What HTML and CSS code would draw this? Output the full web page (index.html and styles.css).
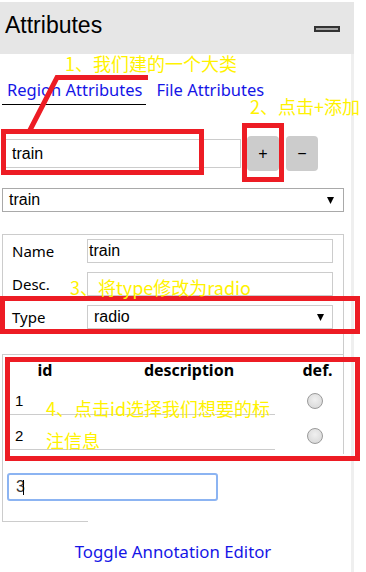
FILE: index.html
```html
<!DOCTYPE html>
<html lang="zh-CN">
<head>
    <meta charset="UTF-8">
    <meta name="viewport" content="width=device-width, initial-scale=1.0">
    <title>Attributes</title>
    <link rel="stylesheet" href="styles.css">
</head>
<body>
    <div class="page">
        <div class="panel">
            <div class="panel-header">
                <span class="panel-title">Attributes</span>
                <span class="minimize"></span>
            </div>
            <div class="panel-body">
                <div class="tabs">
                    <span class="tab active">Region Attributes</span>
                    <span class="tab">File Attributes</span>
                </div>
                <div class="attr-add">
                    <div class="text-input">train</div>
                    <button class="btn">+</button>
                    <button class="btn">&minus;</button>
                </div>
                <div class="select attr-select">
                    <span>train</span>
                    <svg class="select-arrow" viewBox="0 0 7 7"><polygon points="0,0 7,0 3.5,7"></polygon></svg>
                </div>
                <div class="attr-editor">
                    <div class="attr-props">
                        <div class="prop-row">
                            <span class="prop-label">Name</span>
                            <div class="prop-input">train</div>
                        </div>
                        <div class="prop-row">
                            <span class="prop-label">Desc.</span>
                            <div class="prop-input"></div>
                        </div>
                        <div class="prop-row">
                            <span class="prop-label">Type</span>
                            <div class="select prop-select">
                                <span>radio</span>
                                <svg class="select-arrow" viewBox="0 0 7 7"><polygon points="0,0 7,0 3.5,7"></polygon></svg>
                            </div>
                        </div>
                    </div>
                    <div class="options">
                        <div class="options-head">
                            <span>id</span>
                            <span>description</span>
                            <span>def.</span>
                        </div>
                        <div class="option-row">
                            <span class="opt-id">1</span>
                            <span class="opt-desc"></span>
                            <span class="opt-def"><span class="radio"></span></span>
                        </div>
                        <div class="option-row">
                            <span class="opt-id">2</span>
                            <span class="opt-desc"></span>
                            <span class="opt-def"><span class="radio"></span></span>
                        </div>
                    </div>
                </div>
                <div class="options-add">
                    <div class="focus-input">3<span class="caret"></span></div>
                </div>
                <div class="options-foot"></div>
                <div class="toggle-link">Toggle Annotation Editor</div>
            </div>
        </div>

        <!-- hand-drawn annotations on top of the screenshot -->
        <svg class="marks" width="366" height="572" viewBox="0 0 366 572">
            <g fill="none" stroke="#ed1c24" stroke-width="5">
                <polyline points="29,132 57,77.5 148,77.5"></polyline>
                <rect x="3.5" y="131.5" width="198" height="41"></rect>
                <rect x="244.5" y="125.5" width="37" height="54"></rect>
                <rect x="2.5" y="298.5" width="355" height="33"></rect>
                <rect x="7.5" y="359.5" width="350" height="99"></rect>
            </g>
        </svg>
        <div class="note note-1">1、我们建的一个大类</div>
        <div class="note note-2">2、点击+添加</div>
        <div class="note note-3">3、将type修改为radio</div>
        <div class="note note-4">4、点击id选择我们想要的标<br>注信息</div>
    </div>
</body>
</html>
```
FILE: styles.css
```css
* {
    margin: 0;
    padding: 0;
    box-sizing: border-box;
}

body {
    font-family: "Noto Sans", "Open Sans", sans-serif;
    color: #000;
    background: #fff;
}

.page {
    position: relative;
    width: 366px;
    height: 572px;
    overflow: hidden;
}

.panel {
    width: 354px;
    padding-top: 2px;
}

.panel-header {
    height: 52px;
    background: #e6e6e6;
    display: flex;
    justify-content: space-between;
    align-items: flex-start;
}

.panel-title {
    font-family: "Liberation Sans", Arial, sans-serif;
    font-size: 23px;
    line-height: 26px;
    padding: 10px 0 0 5px;
}

.minimize {
    width: 26px;
    height: 6px;
    margin: 24px 14px 0 0;
    border: 2px solid #333;
    background: #a6a6a6;
}

.panel-body {
    height: 518px;
    border-right: 3px solid #efefef;
    padding-left: 2px;
}

.tabs {
    display: flex;
    padding-top: 26px;
    font-size: 16.5px;
    line-height: 20px;
    color: #1515e6;
}

.tab {
    padding: 0 4px 4px 5px;
}

.tab.active {
    border-bottom: 1px solid #000;
}

.tab + .tab {
    margin-left: 5px;
}

.attr-add {
    display: flex;
    align-items: center;
    margin-top: 31px;
}

.text-input {
    width: 239px;
    height: 29px;
    border: 1px solid #ccc;
    padding-left: 9px;
    font: 16px/27px "Liberation Sans", Arial, sans-serif;
}

.btn {
    width: 32px;
    height: 35px;
    margin-left: 6px;
    border: none;
    border-radius: 4px;
    background: #ccc;
    color: #000;
    font: 16px "Liberation Sans", Arial, sans-serif;
}

.btn + .btn {
    margin-left: 7px;
}

.select {
    display: flex;
    align-items: center;
    justify-content: space-between;
    height: 24px;
    border: 1px solid #a9a9a9;
    padding: 0 9px 0 6px;
    font: 16px/22px "Liberation Sans", Arial, sans-serif;
}

.select-arrow {
    width: 7px;
    height: 7px;
    fill: #000;
}

.attr-select {
    width: 342px;
    margin-top: 17px;
}

.attr-editor {
    width: 342px;
    margin-top: 22px;
    border-right: 1px solid #ccc;
}

.attr-props {
    display: flex;
    flex-direction: column;
    gap: 9px;
    padding: 4px 9px 3px 9px;
    border-top: 1px solid #ccc;
    border-left: 1px solid #ccc;
}

.prop-row {
    display: flex;
    align-items: center;
    height: 24px;
}

.prop-label {
    width: 75px;
    font-size: 15px;
}

.prop-input {
    width: 246px;
    height: 24px;
    border: 1px solid #ccc;
    padding-left: 1px;
    font: 16px/22px "Liberation Sans", Arial, sans-serif;
}

.prop-select {
    width: 246px;
    border-color: #ccc;
    padding-right: 8px;
}

.options {
    margin-top: 22px;
    padding: 0 2px 4px 4px;
    border-top: 1px solid #ccc;
    border-left: 1px solid #ccc;
}

.options-head,
.option-row {
    display: grid;
    grid-template-columns: 76px 212px 45px;
}

.options-head {
    padding-top: 5px;
    font-size: 16px;
    font-weight: 700;
    line-height: 20px;
    text-align: center;
}

.option-row {
    height: 35px;
}

.opt-id {
    border-bottom: 1px solid #ccc;
    padding: 12.5px 0 0 8px;
    font: 15px/16px "Liberation Sans", Arial, sans-serif;
}

.opt-desc {
    width: 192px;
    border-bottom: 1px solid #ccc;
}

.opt-def {
    display: flex;
    justify-content: center;
    padding: 12.5px 6px 0 0;
}

.radio {
    width: 16px;
    height: 16px;
    border: 1px solid #9a9a9a;
    border-radius: 50%;
    background: radial-gradient(circle at 50% 40%, #f0f0f0, #d4d4d4);
}

.options-add {
    padding: 19px 0 20px 4px;
    border-left: 1px solid #ccc;
}

.focus-input {
    display: flex;
    align-items: center;
    width: 211px;
    height: 28px;
    padding-left: 7px;
    border: 2px solid #8cb4f2;
    border-radius: 3px;
    color: #333;
    font: 16px/24px "Liberation Sans", Arial, sans-serif;
}

.caret {
    width: 1px;
    height: 15px;
    margin-left: -2px;
    background: #000;
}

.options-foot {
    width: 86px;
    border-top: 1px solid #ccc;
}

.toggle-link {
    width: 342px;
    margin-top: 20px;
    color: #1515e6;
    font-size: 16.8px;
    line-height: 20px;
    text-align: center;
}

.marks {
    position: absolute;
    top: 0;
    left: 0;
    pointer-events: none;
}

.note {
    position: absolute;
    color: #fff200;
    font-family: "Noto Sans CJK SC", sans-serif;
    font-size: 18px;
    line-height: 18px;
    white-space: nowrap;
}

.note-1 { left: 65px; top: 54px; }
.note-2 { left: 250px; top: 97px; }
.note-3 { left: 70px; top: 278px; }
.note-4 { left: 46px; top: 393px; line-height: 31.5px; }
```
